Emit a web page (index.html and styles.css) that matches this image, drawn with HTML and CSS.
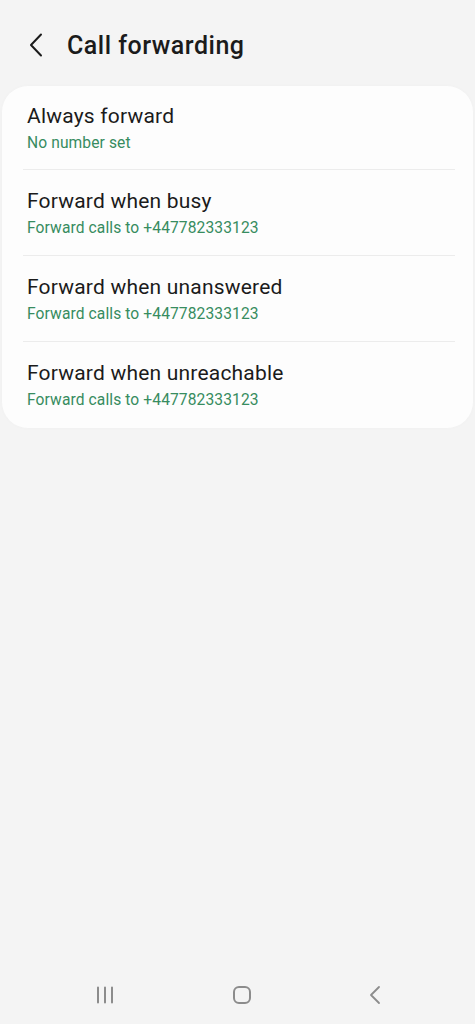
FILE: index.html
```html
<!DOCTYPE html>
<html>
	<head>
		<meta charset="utf-8">
		<title>Call forwarding</title>
		<link rel="stylesheet" href="styles.css">
	</head>
	<body>
		<div class="screen">
			<div class="header">
				<a href="javascript:;" class="back">
					<svg width="14" height="24" viewBox="0 0 14 24"><path d="M12 1.5 L2 12 L12 22.5" fill="none" stroke="#1b1b1b" stroke-width="2" stroke-linecap="round" stroke-linejoin="round"/></svg>
				</a>
				<h1 class="title">Call forwarding</h1>
			</div>
			<ul class="card">
				<li class="row">
					<p class="name">Always forward</p>
					<p class="sub">No number set</p>
				</li>
				<li class="row">
					<p class="name">Forward when busy</p>
					<p class="sub">Forward calls to +447782333123</p>
				</li>
				<li class="row">
					<p class="name">Forward when unanswered</p>
					<p class="sub">Forward calls to +447782333123</p>
				</li>
				<li class="row">
					<p class="name">Forward when unreachable</p>
					<p class="sub">Forward calls to +447782333123</p>
				</li>
			</ul>
			<div class="navbar">
				<svg width="18" height="18" viewBox="0 0 18 18"><path d="M2 1.5v15M9 1.5v15M16 1.5v15" stroke="#8c8c8c" stroke-width="2" stroke-linecap="round"/></svg>
				<svg width="20" height="20" viewBox="0 0 20 20"><rect x="2" y="2" width="16" height="16" rx="5" fill="none" stroke="#8c8c8c" stroke-width="2"/></svg>
				<svg width="12" height="20" viewBox="0 0 12 20"><path d="M10 2 L2 10 L10 18" fill="none" stroke="#8c8c8c" stroke-width="1.8" stroke-linecap="round" stroke-linejoin="round"/></svg>
			</div>
		</div>
	</body>
</html>
```

FILE: styles.css
```css
*{
	margin: 0;
	padding: 0;
	list-style: none;
	text-decoration: none;
	box-sizing: border-box;
}
body{
	background: #f4f4f4;
	font-family: Roboto, "Noto Sans", sans-serif;
	color: #1b1b1b;
}
.screen{
	display: flex;
	flex-direction: column;
	height: 1024px;
}
.header{
	display: flex;
	align-items: center;
	height: 86px;
	padding: 4px 0 0 29px;
}
.back{
	display: flex;
	width: 38px;
}
.title{
	font-size: 25px;
	font-weight: 500;
	letter-spacing: 0.5px;
}
.card{
	background: #fdfdfd;
	margin: 0 2px;
	border-radius: 26px;
	padding: 0 18px 0 21px;
	box-shadow: 0 0 4px rgba(0,0,0,0.02);
}
.row{
	height: 86px;
	display: flex;
	flex-direction: column;
	justify-content: center;
	padding: 0 0 0 4px;
	border-bottom: 1px solid #ececec;
}
.row:first-child{
	height: 84px;
}
.row:last-child{
	border-bottom: none;
}
.name{
	font-size: 21px;
	line-height: 28px;
	letter-spacing: 0.2px;
}
.sub{
	margin-top: 2px;
	font-size: 15.6px;
	line-height: 22px;
	letter-spacing: 0.1px;
	color: #378c60;
}
.navbar{
	margin-top: auto;
	height: 58px;
	display: flex;
	align-items: center;
	justify-content: space-between;
	padding: 0 94px 0 96px;
}
```
